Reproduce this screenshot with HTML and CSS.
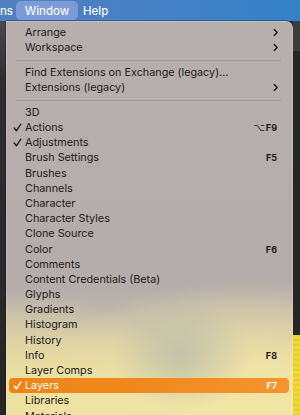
FILE: index.html
```html
<!DOCTYPE html>
<html>
<head>
<meta charset="utf-8">
<link rel="stylesheet" href="styles.css">
</head>
<body>
<div class="menubar">
  <span class="mb-item mb-cut">ns</span>
  <span class="mb-item mb-active">Window</span>
  <span class="mb-item mb-help">Help</span>
</div>
<div class="stage">
  <div class="side-left"></div>
  <div class="menu">
    <div class="row"><span class="label">Arrange</span><span class="chev"><svg width="6" height="9" viewBox="0 0 6 9"><path d="M1.2 1.5l3 3-3 3" fill="none" stroke="#1c1c1c" stroke-width="1.4" stroke-linecap="round" stroke-linejoin="round"/></svg></span></div>
    <div class="row"><span class="label">Workspace</span><span class="chev"><svg width="6" height="9" viewBox="0 0 6 9"><path d="M1.2 1.5l3 3-3 3" fill="none" stroke="#1c1c1c" stroke-width="1.4" stroke-linecap="round" stroke-linejoin="round"/></svg></span></div>
    <div class="sep"></div>
    <div class="row"><span class="label">Find Extensions on Exchange (legacy)...</span></div>
    <div class="row"><span class="label">Extensions (legacy)</span><span class="chev"><svg width="6" height="9" viewBox="0 0 6 9"><path d="M1.2 1.5l3 3-3 3" fill="none" stroke="#1c1c1c" stroke-width="1.4" stroke-linecap="round" stroke-linejoin="round"/></svg></span></div>
    <div class="sep"></div>
    <div class="row"><span class="label">3D</span></div>
    <div class="row"><span class="check"><svg width="9" height="9" viewBox="0 0 9 9"><path d="M1.2 5l2.2 2.8L7.8 1.2" fill="none" stroke="#1c1c1c" stroke-width="1.4" stroke-linecap="round" stroke-linejoin="round"/></svg></span><span class="label">Actions</span><span class="key"><span class="opt">⌥</span>F9</span></div>
    <div class="row"><span class="check"><svg width="9" height="9" viewBox="0 0 9 9"><path d="M1.2 5l2.2 2.8L7.8 1.2" fill="none" stroke="#1c1c1c" stroke-width="1.4" stroke-linecap="round" stroke-linejoin="round"/></svg></span><span class="label">Adjustments</span></div>
    <div class="row"><span class="label">Brush Settings</span><span class="key">F5</span></div>
    <div class="row"><span class="label">Brushes</span></div>
    <div class="row"><span class="label">Channels</span></div>
    <div class="row"><span class="label">Character</span></div>
    <div class="row"><span class="label">Character Styles</span></div>
    <div class="row"><span class="label">Clone Source</span></div>
    <div class="row"><span class="label">Color</span><span class="key">F6</span></div>
    <div class="row"><span class="label">Comments</span></div>
    <div class="row"><span class="label">Content Credentials (Beta)</span></div>
    <div class="row"><span class="label">Glyphs</span></div>
    <div class="row"><span class="label">Gradients</span></div>
    <div class="row"><span class="label">Histogram</span></div>
    <div class="row"><span class="label">History</span></div>
    <div class="row"><span class="label">Info</span><span class="key">F8</span></div>
    <div class="row"><span class="label">Layer Comps</span></div>
    <div class="row row-sel"><span class="check"><svg width="9" height="9" viewBox="0 0 9 9"><path d="M1.2 5l2.2 2.8L7.8 1.2" fill="none" stroke="#ffffff" stroke-width="1.4" stroke-linecap="round" stroke-linejoin="round"/></svg></span><span class="label">Layers</span><span class="key">F7</span></div>
    <div class="row"><span class="label">Libraries</span></div>
    <div class="row row-last"><span class="label">Materials</span></div>
  </div>
  <div class="side-right">
    <div class="sr-top"></div>
    <div class="sr-mid"></div>
    <div class="sr-yellow"></div>
  </div>
</div>
</body>
</html>
```

FILE: styles.css
```css
* { box-sizing: border-box; }
html, body {
  margin: 0;
  padding: 0;
  width: 300px;
  height: 415px;
  overflow: hidden;
  background: #2a2a2a;
  font-family: Inter, "Noto Sans", "Liberation Sans", sans-serif;
}
.menubar {
  height: 21px;
  display: flex;
  align-items: center;
  background: linear-gradient(90deg, #4f7fc0 0%, #4a80c4 40%, #3381c8 100%);
  color: #f4f6fb;
  font-size: 11.5px;
  font-weight: 500;
}
.mb-item {
  height: 19px;
  display: flex;
  align-items: center;
  border-radius: 5px;
}
.mb-cut {
  width: 16px;
  justify-content: flex-end;
  padding-right: 3px;
  overflow: hidden;
}
.mb-active {
  background: #7a9bd6;
  width: 62px;
  justify-content: center;
}
.mb-help {
  margin-left: 5px;
}
.stage {
  display: flex;
  height: 394px;
}
.side-left {
  width: 6px;
  background: linear-gradient(180deg, #4a4a4a 0%, #2e2e2e 15%, #262626 100%);
}
.menu {
  width: 287px;
  height: 404px;
  border-radius: 0 7px 0 0;
  padding-top: 4px;
  color: #1b1b1b;
  font-size: 10.8px;
  background:
    radial-gradient(ellipse 70px 55px at 175px 335px, rgba(172,180,170,0.65), rgba(172,180,170,0) 100%),
    radial-gradient(ellipse 260px 160px at 240px 420px, #f3e7a2 0%, #f0e3a6 45%, rgba(238,226,170,0) 100%),
    radial-gradient(ellipse 190px 140px at 10px 410px, #efe19a 0%, #ece0a0 35%, rgba(236,224,160,0) 100%),
    linear-gradient(180deg, #b6afad 0%, #b4adab 66%, #c8bfaa 78%, #e6da9f 92%, #efe3a2 100%);
  box-shadow: 0 0 0 0.5px rgba(0,0,0,0.5), inset 0 0 0 0.5px rgba(255,255,255,0.35);
  overflow: hidden;
}
.row {
  position: relative;
  display: flex;
  align-items: center;
  height: 15.2px;
  margin: 0 4px 0 3px;
  padding: 0 12px 0 16px;
  border-radius: 4px;
  white-space: nowrap;
}
.row-last { height: 13px; overflow: hidden; align-items: flex-start; padding-top: 1px; }
.label { flex: 1; }
.check {
  position: absolute;
  left: 4px;
  top: 3px;
  display: flex;
}
.chev {
  display: flex;
  align-items: center;
  margin-right: -2px;
}
.key {
  font-size: 9px;
  font-weight: 700;
  display: flex;
  align-items: center;
  gap: 1px;
}
.opt {
  font-weight: 400;
  font-size: 10px;
  font-family: "DejaVu Sans", sans-serif;
}
.sep {
  height: 9.5px;
  display: flex;
  align-items: center;
  margin: 0 12px 0 10px;
}
.sep::before {
  content: "";
  flex: 1;
  height: 1px;
  background: rgba(0,0,0,0.14);
}
.row-sel {
  background: linear-gradient(90deg, #ee8416 0%, #f08a1e 50%, #f5942e 100%);
  color: #ffffff;
}
.side-right {
  flex: 1;
  display: flex;
  flex-direction: column;
}
.sr-top { height: 30px; background: #3c3c3c; }
.sr-mid { height: 284px; background: #262626; }
.sr-yellow {
  flex: 1;
  background: repeating-linear-gradient(180deg, #e8cf2a 0px, #f3dc3a 3px, #e2c820 5px);
}
```
